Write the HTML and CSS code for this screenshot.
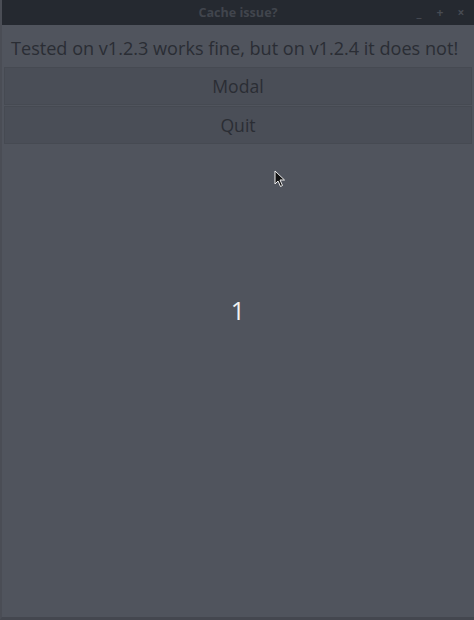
FILE: index.html
```html
<!DOCTYPE html>
<html>
<head>
<meta charset="utf-8">
<link rel="stylesheet" href="styles.css">
</head>
<body>
<div class="window">
  <div class="titlebar">
    <span class="title">Cache issue?</span>
    <div class="controls">
      <span class="ctl">_</span>
      <span class="ctl">+</span>
      <span class="ctl">×</span>
    </div>
  </div>
  <div class="content">
    <div class="label">Tested on v1.2.3 works fine, but on v1.2.4 it does not!</div>
    <div class="buttons">
      <div class="btn">Modal</div>
      <div class="btn">Quit</div>
    </div>
    <div class="counter">1</div>
  </div>
  <svg class="cursor" width="12" height="18" viewBox="0 0 12 18">
    <path d="M1 1 L1 14 L4 11 L6.5 16.5 L8.5 15.5 L6 10 L10.5 10 Z" fill="#111" stroke="#eee" stroke-width="1"/>
  </svg>
</div>
</body>
</html>
```
FILE: styles.css
```css
html, body {
  margin: 0;
  padding: 0;
  background: #50545d;
}
.window {
  position: relative;
  width: 474px;
  height: 620px;
  display: flex;
  flex-direction: column;
  background: #50545d;
  font-family: "Open Sans", "Noto Sans", sans-serif;
  overflow: hidden;
  box-sizing: border-box;
  border-left: 2px solid #4a4d55;
  border-bottom: 3px solid #44474f;
}
.titlebar {
  height: 25px;
  flex: 0 0 25px;
  background: #252930;
  display: flex;
  align-items: center;
  justify-content: center;
  position: relative;
}
.title {
  font-size: 12.6px;
  font-weight: bold;
  color: #41454d;
}
.controls {
  position: absolute;
  right: 8px;
  top: 0;
  height: 25px;
  display: flex;
  align-items: center;
  gap: 11px;
}
.ctl {
  color: #474b53;
  font-size: 12px;
  font-weight: bold;
  width: 10px;
  text-align: center;
}
.content {
  flex: 1;
  display: flex;
  flex-direction: column;
}
.label {
  font-size: 18.1px;
  color: #2a2d34;
  padding: 11px 0 0 9px;
  height: 31px;
  line-height: 24px;
  white-space: nowrap;
}
.buttons {
  display: flex;
  flex-direction: column;
  padding: 0 2px 0 2px;
  gap: 1px;
}
.btn {
  height: 36px;
  background: #4a4e57;
  border: 1px solid #464a52;
  color: #2a2d34;
  font-size: 17.6px;
  display: flex;
  align-items: center;
  justify-content: center;
}
.counter {
  flex: 1;
  display: flex;
  align-items: center;
  justify-content: center;
  color: #f2f2f2;
  font-size: 25px;
  padding-bottom: 142px;
}
.cursor {
  position: absolute;
  left: 272px;
  top: 170px;
}
```
